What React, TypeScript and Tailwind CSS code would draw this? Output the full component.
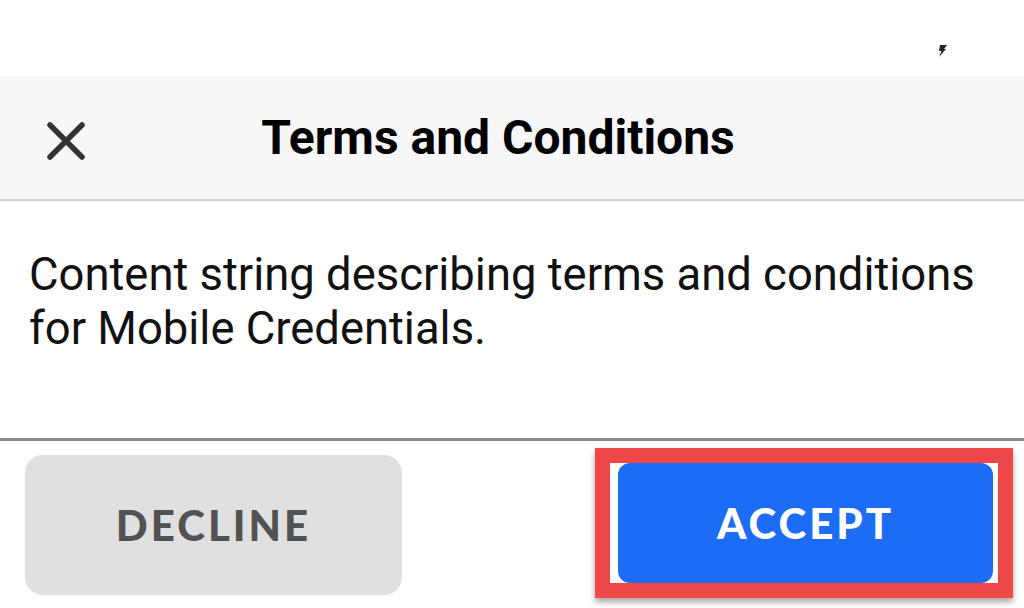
import React from 'react';

export default function App() {
    return (
        <div className="w-[1024px] h-[608px] bg-white flex flex-col overflow-hidden font-['Roboto',sans-serif]">
            {/* Status strip */}
            <div className="h-[76px] flex justify-end items-start pr-[76px] pt-[44px]">
                <svg width="12" height="14" viewBox="0 0 12 14">
                    <path d="M4 1 L11 1 L8 5 L10 5 L3 13 L5.5 7 L3 7 Z" fill="#222" />
                </svg>
            </div>

            {/* Header */}
            <div className="h-[125px] bg-[#f7f7f7] border-b-2 border-[#cfcfcf] flex items-center relative">
                <button className="absolute left-[44px] top-[43px] w-[44px] h-[44px] flex items-center justify-center">
                    <svg width="40" height="40" viewBox="0 0 40 40">
                        <path d="M4 4 L36 36 M36 4 L4 36" stroke="#333" strokeWidth="5.5" strokeLinecap="round" />
                    </svg>
                </button>
                <h1 className="w-full text-center pr-[28px] text-[48px] font-bold text-black">
                    Terms and Conditions
                </h1>
            </div>

            {/* Body */}
            <div className="flex-1 px-[29px] pt-[47px] text-[45.4px] leading-[54px] text-[#111]">
                Content string describing terms and conditions for Mobile Credentials.
            </div>

            {/* Footer */}
            <div className="h-[3px] bg-[#8a8a8a]" />
            <div className="h-[167px] flex items-start justify-between pl-[25px] pr-[11px] font-['Lato',sans-serif]">
                <button className="mt-[14px] w-[377px] h-[140px] rounded-[18px] bg-[#e0e0e0] text-[#525252] text-[42px] font-black tracking-[3px]">
                    DECLINE
                </button>
                <div className="mt-[7px] w-[418px] h-[150px] border-[15px] border-[#f04848] shadow-[0_4px_6px_rgba(0,0,0,0.35)] bg-white flex pl-[8px] pr-[5px]">
                    <button className="flex-1 rounded-[12px] bg-[#1d6cf5] text-white text-[42px] font-black tracking-[3px]">
                        ACCEPT
                    </button>
                </div>
            </div>
        </div>
    );
}
